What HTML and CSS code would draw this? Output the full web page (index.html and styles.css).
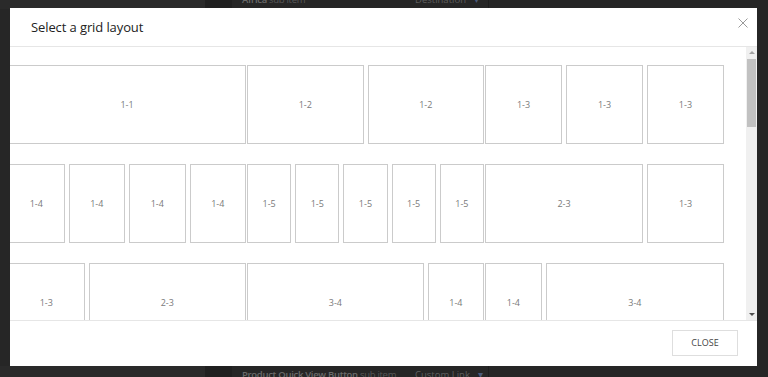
FILE: index.html
```html
<!DOCTYPE html>
<html lang="en">
<head>
    <meta charset="UTF-8">
    <meta name="viewport" content="width=device-width, initial-scale=1.0">
    <title>Select a grid layout</title>
    <link rel="stylesheet" href="styles.css">
</head>
<body>
    <!-- page behind the dialog -->
    <div class="page">
        <div class="menu-row menu-row-top">
            <div class="cell cell-side"></div>
            <div class="cell cell-gutter"></div>
            <div class="cell cell-label"><b>Africa</b> <i>sub item</i></div>
            <div class="cell cell-type">Destination <span class="caret">&#9662;</span></div>
        </div>
        <div class="menu-row menu-row-bottom">
            <div class="cell cell-side"></div>
            <div class="cell cell-gutter"></div>
            <div class="cell cell-label"><b>Product Quick View Button</b> <i>sub item</i></div>
            <div class="cell cell-type">Custom Link <span class="caret">&#9662;</span></div>
        </div>
    </div>

    <div class="modal">
        <div class="modal-header">
            <h2 class="modal-title">Select a grid layout</h2>
            <span class="modal-close">
                <svg width="10" height="10" viewBox="0 0 10 10">
                    <path d="M0.5 0.5 L9.5 9.5 M9.5 0.5 L0.5 9.5" stroke="#9a9a9a" stroke-width="1" fill="none"/>
                </svg>
            </span>
        </div>

        <div class="modal-body">
            <div class="layouts">
                <div class="layout-grid">
                    <!-- row 1 -->
                    <div class="group">
                        <div class="cell-box w1-1">1-1</div>
                    </div>
                    <div class="group">
                        <div class="cell-box w1-2">1-2</div>
                        <div class="cell-box w1-2">1-2</div>
                    </div>
                    <div class="group">
                        <div class="cell-box w1-3">1-3</div>
                        <div class="cell-box w1-3">1-3</div>
                        <div class="cell-box w1-3">1-3</div>
                    </div>

                    <!-- row 2 -->
                    <div class="group">
                        <div class="cell-box w1-4">1-4</div>
                        <div class="cell-box w1-4">1-4</div>
                        <div class="cell-box w1-4">1-4</div>
                        <div class="cell-box w1-4">1-4</div>
                    </div>
                    <div class="group">
                        <div class="cell-box w1-5">1-5</div>
                        <div class="cell-box w1-5">1-5</div>
                        <div class="cell-box w1-5">1-5</div>
                        <div class="cell-box w1-5">1-5</div>
                        <div class="cell-box w1-5">1-5</div>
                    </div>
                    <div class="group">
                        <div class="cell-box w2-3">2-3</div>
                        <div class="cell-box w1-3">1-3</div>
                    </div>

                    <!-- row 3 -->
                    <div class="group">
                        <div class="cell-box w1-3">1-3</div>
                        <div class="cell-box w2-3">2-3</div>
                    </div>
                    <div class="group">
                        <div class="cell-box w3-4">3-4</div>
                        <div class="cell-box w1-4">1-4</div>
                    </div>
                    <div class="group">
                        <div class="cell-box w1-4">1-4</div>
                        <div class="cell-box w3-4">3-4</div>
                    </div>
                </div>
            </div>
            <div class="scrollbar">
                <span class="arrow arrow-up"></span>
                <span class="thumb"></span>
                <span class="track-rest"></span>
                <span class="arrow arrow-down"></span>
            </div>
        </div>

        <div class="modal-footer">
            <button class="btn-close">CLOSE</button>
        </div>
    </div>
</body>
</html>
```

FILE: styles.css
```css
* {
    box-sizing: border-box;
    margin: 0;
    padding: 0;
}

html, body {
    height: 100%;
    overflow: hidden;
}

body {
    font-family: "Open Sans", "Noto Sans", sans-serif;
    background-color: #262626;
}

/* page behind the dialog */
.page {
    height: 100vh;
    display: flex;
    flex-direction: column;
    justify-content: space-between;
}

.menu-row {
    display: flex;
    height: 18px;
    font-size: 9.5px;
    line-height: 18px;
    color: #6a6a6a;
}

.menu-row-top {
    margin-top: -9px;
}

.menu-row-bottom {
    margin-bottom: -7px;
}

.cell-side {
    width: 205px;
    background-color: #2a2a2a;
}

.cell-gutter {
    width: 27px;
    background-color: #202020;
}

.cell-label {
    width: 181px;
    padding-left: 10px;
    white-space: nowrap;
    overflow: hidden;
    letter-spacing: -0.3px;
}

.cell-label b {
    font-weight: 600;
}

.cell-label i {
    font-style: normal;
    color: #585858;
}

.cell-type {
    padding-left: 2px;
    width: 76px;
    white-space: nowrap;
    color: #5e5e5e;
    border-right: 1px solid #1d1d1d;
}

.caret {
    margin-left: 6px;
    color: #4a5a7a;
}

/* dialog */
.modal {
    position: fixed;
    top: 8px;
    left: 10px;
    width: 747px;
    height: 358px;
    background-color: #fff;
    display: flex;
    flex-direction: column;
}

.modal-header {
    height: 39px;
    flex-shrink: 0;
    display: flex;
    align-items: center;
    justify-content: space-between;
    padding: 0 9px 0 21px;
    border-bottom: 1px solid #e6e6e6;
}

.modal-title {
    font-size: 13px;
    font-weight: 500;
    color: #222;
    letter-spacing: -0.1px;
    margin-top: -1px;
}

.modal-close {
    display: flex;
    margin-top: -8px;
    cursor: pointer;
}

.modal-body {
    height: 273px;
    flex-shrink: 0;
    display: flex;
    overflow: hidden;
}

.layouts {
    flex: 1;
    overflow: hidden;
    padding-top: 18px;
}

.layout-grid {
    display: grid;
    grid-template-columns: 238px 237px 239px;
    grid-auto-rows: 79px;
    column-gap: 1px;
    row-gap: 20px;
    margin-left: -2px;
}

.group {
    display: flex;
    gap: 4px;
}

.cell-box {
    flex: 0 0 calc(var(--part) * (100% + 4px) - 4px);
    border: 1px solid #cbcbcb;
    display: flex;
    align-items: center;
    justify-content: center;
    font-size: 9px;
    color: #7a7a7a;
    cursor: pointer;
}

.w1-1 { --part: 1; }
.w1-2 { --part: 0.5; }
.w1-3 { --part: 0.3333; }
.w2-3 { --part: 0.6667; }
.w1-4 { --part: 0.25; }
.w3-4 { --part: 0.75; }
.w1-5 { --part: 0.2; }

/* scrollbar */
.scrollbar {
    width: 11px;
    flex-shrink: 0;
    background-color: #f0f0f0;
    display: flex;
    flex-direction: column;
    align-items: center;
}

.arrow {
    height: 11px;
    width: 11px;
    flex-shrink: 0;
    display: flex;
    align-items: center;
    justify-content: center;
}

.arrow::before {
    content: "";
    border-left: 3px solid transparent;
    border-right: 3px solid transparent;
}

.arrow-up::before {
    border-bottom: 3px solid #a3a3a3;
}

.arrow-down::before {
    border-top: 3px solid #505050;
}

.thumb {
    width: 9px;
    height: 68px;
    margin-top: 1px;
    background-color: #c1c1c1;
}

.track-rest {
    flex: 1;
}

/* footer */
.modal-footer {
    flex: 1;
    border-top: 1px solid #e6e6e6;
    display: flex;
    align-items: center;
    justify-content: flex-end;
    padding: 0 19px 2px 0;
}

.btn-close {
    width: 66px;
    height: 26px;
    background-color: #fff;
    border: 1px solid #dedede;
    font-family: "Open Sans", "Noto Sans", sans-serif;
    font-size: 9px;
    color: #444;
    cursor: pointer;
}
```
